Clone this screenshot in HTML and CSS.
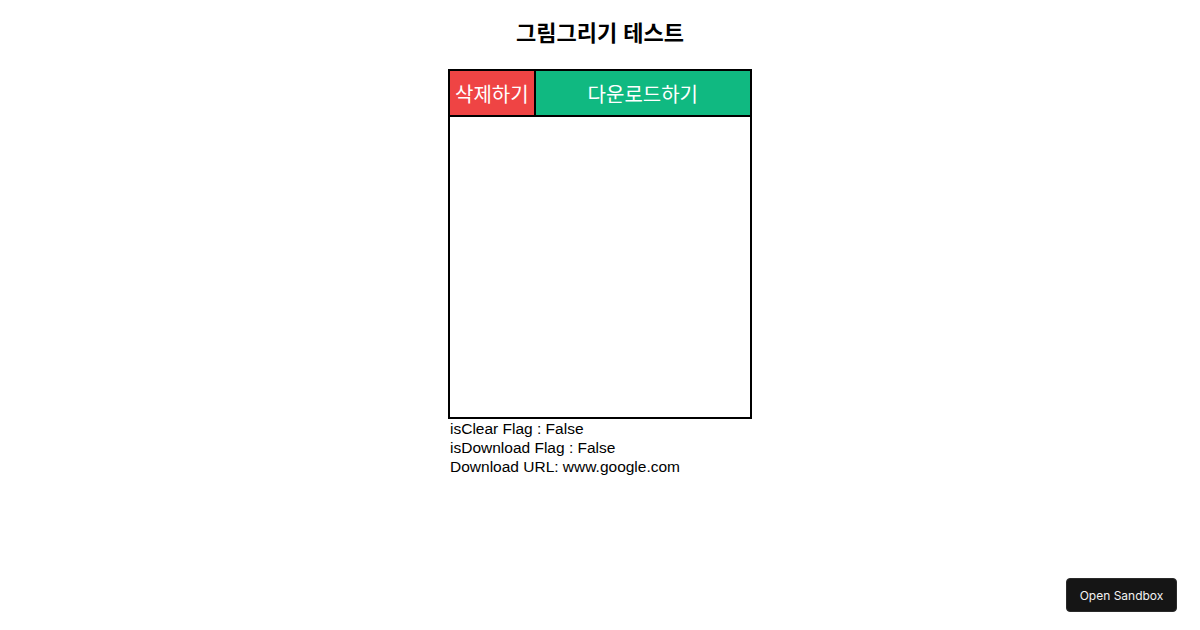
FILE: index.html
```html
<!DOCTYPE html>
<html lang="ko">
<head>
<meta charset="utf-8">
<title>그림그리기 테스트</title>
<link rel="stylesheet" href="styles.css">
</head>
<body>
<h2 class="title">그림그리기 테스트</h2>
<div class="pad">
  <div class="actions">
    <button class="btn btn-clear">삭제하기</button>
    <button class="btn btn-download">다운로드하기</button>
  </div>
  <div class="canvas"></div>
  <div class="status">
    <div>isClear Flag : False</div>
    <div>isDownload Flag : False</div>
    <div>Download URL: www.google.com</div>
  </div>
</div>
<a class="sandbox-btn">Open Sandbox</a>
</body>
</html>
```

FILE: styles.css
```css
html, body {
  margin: 0;
  padding: 0;
  background: #ffffff;
}
body {
  font-family: "Liberation Sans", "Noto Sans CJK KR", sans-serif;
  color: #000;
}
.title {
  margin: 20px 0 21px;
  font-size: 22px;
  line-height: 28px;
  font-weight: bold;
  text-align: center;
}
.pad {
  width: 304px;
  margin: 0 auto;
}
.actions {
  display: flex;
  height: 44px;
  border: 2px solid #000;
  border-bottom: none;
}
.btn {
  font-family: "Liberation Sans", "Noto Sans CJK KR", sans-serif;
  font-size: 20px;
  color: #fff;
  border: none;
  margin: 0;
  padding: 0 5px;
  cursor: pointer;
}
.btn-clear {
  background: #ef4444;
}
.btn-download {
  flex: 1;
  background: #10b981;
  border-left: 2px solid #000;
}
.canvas {
  box-sizing: border-box;
  width: 304px;
  height: 304px;
  border: 2px solid #000;
  background: #fff;
}
.status {
  padding-left: 2px;
  font-size: 15.5px;
  line-height: 19px;
}
.sandbox-btn {
  position: fixed;
  right: 23px;
  bottom: 18px;
  width: 111px;
  height: 34px;
  box-sizing: border-box;
  display: flex;
  align-items: center;
  justify-content: center;
  background: #151515;
  color: #f2f2f2;
  border-radius: 4px;
  font-family: "Inter", "Liberation Sans", sans-serif;
  font-size: 12px;
  border: 1px solid #2a2a2a;
}
```
